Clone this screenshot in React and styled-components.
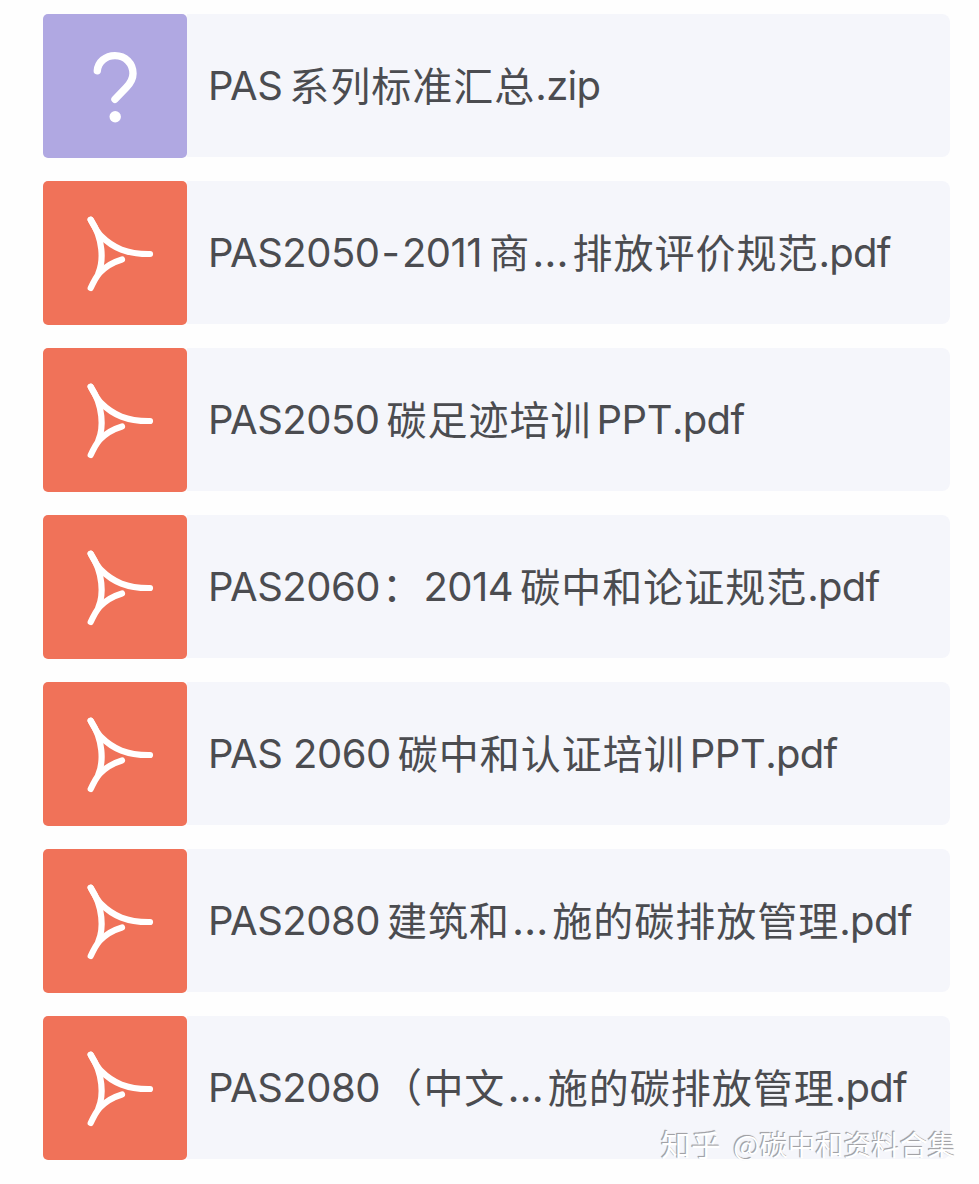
import React from "react";
import styled, { createGlobalStyle } from "styled-components";

const files = [
	{ type: "zip", name: "PAS系列标准汇总.zip" },
	{ type: "pdf", name: "PAS2050-2011商…排放评价规范.pdf" },
	{ type: "pdf", name: "PAS2050碳足迹培训PPT.pdf" },
	{ type: "pdf", name: "PAS2060：2014碳中和论证规范.pdf" },
	{ type: "pdf", name: "PAS 2060碳中和认证培训PPT.pdf" },
	{ type: "pdf", name: "PAS2080建筑和…施的碳排放管理.pdf" },
	{ type: "pdf", name: "PAS2080（中文…施的碳排放管理.pdf" },
];

// extension, ellipsis, dash, full-width marks, latin and chinese runs
const splitName = (name) =>
	name.match(/\.\w+$|…|-|[：（]|[A-Z0-9 ]+|[\u4e00-\u9fff]+/g);

const pickRun = (part) => {
	if (part[0] === ".") return Extension;
	if (part === "…") return Dots;
	if (part === "-") return Dash;
	if (/[：（]/.test(part)) return Mark;
	if (/[A-Z0-9]/.test(part)) return Latin;
	return Han;
};

function UnknownIcon() {
	return (
		<Glyph viewBox="0 0 144 144" strokeWidth="7.4">
			<path d="M54.3 56.8C55 48 62.5 41.6 72 41.6C82.5 41.6 90 49.5 90 59.5C90 65 87.5 69 83.5 73.3L72 85.3" />
			<circle cx="72.2" cy="102.7" r="5.7" fill="#fff" stroke="none" />
		</Glyph>
	);
}

function PdfIcon() {
	return (
		<Glyph viewBox="0 0 144 144" strokeWidth="6.2">
			<path d="M47.7 38.7C51 45 54 50.5 57.5 54.5C70 67 84 73.3 107 73" />
			<path d="M47.7 38.7C60.5 58 60.5 80 55.5 92" />
			<path d="M47.7 107C50.5 101 53 96 56.5 92C62 86 69 81.5 79 78.5" />
		</Glyph>
	);
}

function FileRow({ type, name }) {
	return (
		<Row>
			<Tile $type={type}>{type === "zip" ? <UnknownIcon /> : <PdfIcon />}</Tile>
			<Body>
				<Name>
					{splitName(name).map((part, index) => {
						const Run = pickRun(part);
						return <Run key={index}>{part}</Run>;
					})}
				</Name>
			</Body>
		</Row>
	);
}

export default function App() {
	return (
		<Page>
			<GlobalStyle />
			<List>
				{files.map((file) => (
					<FileRow key={file.name} type={file.type} name={file.name} />
				))}
			</List>
			<Watermark>
				<Site>知乎</Site> @碳中和资料合集
			</Watermark>
		</Page>
	);
}

const GlobalStyle = createGlobalStyle`
	* {
		box-sizing: border-box;
	}
	body {
		margin: 0;
		background-color: #fefefe;
	}
`;

const Page = styled.main`
	position: relative;
	height: 1184px;
	padding: 14px 29px 0 43px;
	overflow: hidden;
`;

const List = styled.ul`
	display: flex;
	flex-direction: column;
	gap: 23px;
	margin: 0;
	padding: 0;
	list-style: none;
`;

const Row = styled.li`
	display: flex;
	height: 144px;
`;

const Tile = styled.div`
	flex: 0 0 144px;
	height: 144px;
	border-radius: 5px;
	background-color: ${(props) => (props.$type === "zip" ? "#b0a8e2" : "#f07259")};
`;

const Glyph = styled.svg`
	display: block;
	width: 144px;
	height: 144px;
	fill: none;
	stroke: #fff;
	stroke-linecap: round;
	stroke-linejoin: round;
`;

const Body = styled.div`
	flex: 1;
	display: flex;
	align-items: center;
	height: 143px;
	padding: 0 0 0 21px;
	border-radius: 0 8px 8px 0;
	background-color: #f5f6fb;
`;

const Latin = styled.span`
	letter-spacing: -0.5px;
`;

const Extension = styled.span`
	letter-spacing: -0.7px;
`;

const Dash = styled.span`
	margin: 0 2px;
`;

const Han = styled.span`
	font-family: "Noto Sans CJK SC", sans-serif;
	line-height: 1;
	letter-spacing: 1px;
	vertical-align: -1px;
`;

const Mark = styled.span`
	margin-left: 2px;
	font-family: "Noto Sans CJK SC", sans-serif;
	line-height: 1;
	letter-spacing: 1.4px;
`;

const Dots = styled.span`
	margin-left: 2px;
	font-size: 42px;
	line-height: 1;
	letter-spacing: 4px;
`;

const Name = styled.span`
	font-family: Inter, "Noto Sans CJK SC", sans-serif;
	font-size: 40px;
	line-height: 56px;
	color: #4b4c50;
	white-space: nowrap;

	${Latin} + ${Han} {
		margin-left: 7px;
	}
	${Han} + ${Latin} {
		margin-left: 5px;
	}
`;

const Watermark = styled.div`
	position: absolute;
	top: 1122px;
	left: 661px;
	font-family: "Noto Sans CJK SC", sans-serif;
	font-size: 28px;
	line-height: 42px;
	word-spacing: 6px;
	color: #fff;
	text-shadow: -1px -1px 0 #a2a2a6, -1px -1px 1px #a2a2a6;
	white-space: nowrap;
`;

const Site = styled.span`
	font-size: 30px;
`;
